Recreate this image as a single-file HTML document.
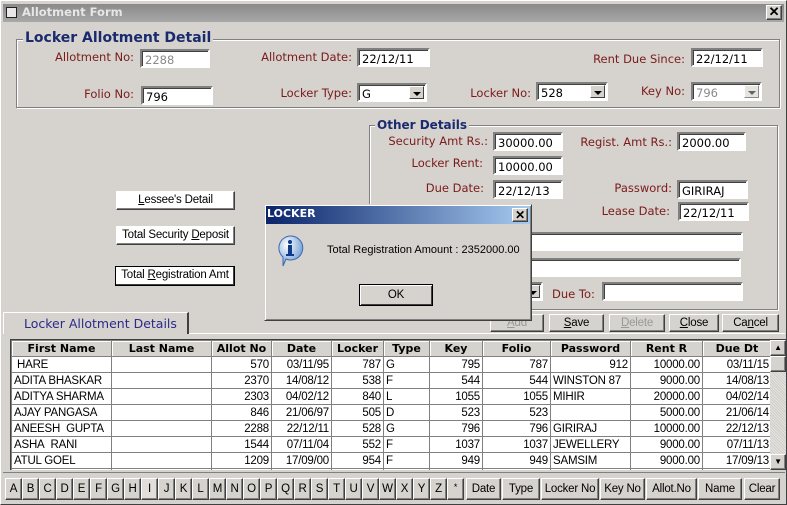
<!DOCTYPE html><html><head><meta charset="utf-8"><style>
*{box-sizing:border-box;margin:0;padding:0}
body{width:787px;height:505px;background:#d6d3ce;position:relative;overflow:hidden;font-family:"DejaVu Sans",Verdana,sans-serif;font-size:11px}
.a{position:absolute}
.lbl{position:absolute;color:#7a1a1a;text-align:right;white-space:nowrap;font-size:11.5px}
.in{position:absolute;background:#fff;border:2px solid;border-color:#808080 #fff #fff #808080;box-shadow:inset 1px 1px 0 #404040;font-size:11.5px;padding:2px 3px;white-space:nowrap;height:19px}
.dis{color:#8a8a8a}
.arr{position:absolute;right:1px;top:1px;bottom:1px;width:15px;background:#d6d3ce;border:1px solid;border-color:#fff #404040 #404040 #fff}
.arr:after{content:"";position:absolute;left:3px;top:5px;border-left:4px solid transparent;border-right:4px solid transparent;border-top:4px solid #000}
.grp{position:absolute;border:1px solid #808080;box-shadow:1px 1px 0 #fff,inset 1px 1px 0 #fff}
.leg{position:absolute;background:#d6d3ce;color:#1a2a6e;font-weight:bold;padding:0 2px}
.btn{position:absolute;background:#d6d3ce;border:1px solid;border-color:#fff #404040 #404040 #fff;box-shadow:inset -1px -1px 0 #808080;text-align:center;font-family:"Liberation Sans",Arial,sans-serif;font-size:11.5px;letter-spacing:-0.2px;white-space:nowrap}
.wb{background:#fff}
table{border-collapse:collapse;font-family:"Liberation Sans",Arial,sans-serif;font-size:11.5px;letter-spacing:-0.2px}
td{border:1px solid #808080;height:16px;padding:0 2px;background:#fff;white-space:nowrap;line-height:14px;overflow:hidden}
th{height:16px;background:#d6d3ce;border:1px solid #808080;box-shadow:inset 1px 1px 0 #fff;font-family:"DejaVu Sans",sans-serif;font-size:11px;font-weight:bold;padding:0;letter-spacing:0}
.r{text-align:right}
</style></head><body>
<div class="a" style="left:0;top:0;width:787px;height:505px;border:1px solid #fff;border-right-color:#404040;border-bottom-color:#404040"></div>
<div class="a" style="left:3px;top:4px;width:781px;height:18px;background:linear-gradient(#8a8a8a,#a8a8a8)"></div>
<div class="a" style="left:6px;top:7px;width:11px;height:11px;background:#e8e8e8;border:1px solid #222"></div>
<div class="a" style="left:22px;top:5px;color:#e6e6e6;font-weight:bold;font-family:'DejaVu Sans';font-size:11.5px">Allotment Form</div>
<div class="btn" style="left:766px;top:5px;width:16px;height:15px;font-size:13px;line-height:12px;font-weight:bold">✕</div>

<div class="grp" style="left:16px;top:39px;width:764px;height:69px"></div>
<div class="leg" style="left:23px;top:30px;font-size:14px">Locker Allotment Detail</div>
<div class="lbl" style="left:20px;width:114px;top:50px">Allotment No:</div>
<div class="in dis" style="left:140px;top:49px;width:70px">2288</div>
<div class="lbl" style="left:240px;width:112px;top:50px">Allotment Date:</div>
<div class="in" style="left:357px;top:48px;width:73px">22/12/11</div>
<div class="lbl" style="left:560px;width:125px;top:52px">Rent Due Since:</div>
<div class="in" style="left:691px;top:48px;width:72px">22/12/11</div>
<div class="lbl" style="left:20px;width:114px;top:87px">Folio No:</div>
<div class="in" style="left:141px;top:86px;width:72px">796</div>
<div class="lbl" style="left:240px;width:112px;top:86px">Locker Type:</div>
<div class="in" style="left:357px;top:83px;width:70px">G<span class="arr"></span></div>
<div class="lbl" style="left:440px;width:91px;top:86px">Locker No:</div>
<div class="in" style="left:536px;top:82px;width:72px">528<span class="arr"></span></div>
<div class="lbl" style="left:610px;width:75px;top:84px">Key No:</div>
<div class="in dis" style="left:691px;top:82px;width:71px;background:#fff">796<span class="arr" style="opacity:.6"></span></div>

<div class="grp" style="left:369px;top:125px;width:409px;height:185px"></div>
<div class="leg" style="left:375px;top:118px;font-size:12px">Other Details</div>
<div class="lbl" style="left:370px;width:118px;top:134px">Security Amt Rs.:</div>
<div class="in" style="left:493px;top:132px;width:70px">30000.00</div>
<div class="lbl" style="left:560px;width:112px;top:135px">Regist. Amt Rs.:</div>
<div class="in" style="left:677px;top:132px;width:69px">2000.00</div>
<div class="lbl" style="left:380px;width:103px;top:156px">Locker Rent:</div>
<div class="in" style="left:493px;top:156px;width:70px">10000.00</div>
<div class="lbl" style="left:380px;width:104px;top:181px">Due Date:</div>
<div class="in" style="left:493px;top:180px;width:70px">22/12/13</div>
<div class="lbl" style="left:580px;width:92px;top:181px">Password:</div>
<div class="in" style="left:677px;top:180px;width:71px">GIRIRAJ</div>
<div class="lbl" style="left:580px;width:90px;top:204px">Lease Date:</div>
<div class="in" style="left:678px;top:202px;width:71px">22/12/11</div>
<div class="in" style="left:520px;top:232px;width:223px"></div>
<div class="in" style="left:520px;top:258px;width:221px"></div>
<div class="in" style="left:500px;top:282px;width:43px"><span class="arr"></span></div>
<div class="lbl" style="left:552px;top:287px;width:48px;text-align:left">Due To:</div>
<div class="in" style="left:602px;top:282px;width:141px"></div>

<div class="btn wb" style="left:116px;top:191px;width:119px;height:19px;line-height:16px"><u>L</u>essee's Detail</div>
<div class="btn wb" style="left:116px;top:226px;width:119px;height:19px;line-height:16px">Total Security <u>D</u>eposit</div>
<div class="btn wb" style="left:115px;top:266px;width:120px;height:20px;line-height:17px;border:1px solid #000;box-shadow:inset -1px -1px 0 #404040">Total <u>R</u>egistration Amt</div>

<div class="btn" style="left:490px;top:314px;width:54px;height:18px;color:#999;line-height:16px"><u>A</u>dd</div>
<div class="btn" style="left:549px;top:314px;width:55px;height:18px;line-height:16px"><u>S</u>ave</div>
<div class="btn" style="left:609px;top:314px;width:56px;height:18px;color:#999;line-height:16px"><u>D</u>elete</div>
<div class="btn" style="left:669px;top:314px;width:50px;height:18px;line-height:16px"><u>C</u>lose</div>
<div class="btn" style="left:722px;top:314px;width:57px;height:18px;line-height:16px">Ca<u>n</u>cel</div>

<div class="a" style="left:3px;top:333px;width:782px;height:1px;background:#fff"></div>
<div class="a" style="left:3px;top:312px;width:186px;height:22px;background:#d6d3ce;border-top:1px solid #fff;border-left:1px solid #fff;border-right:2px solid #404040"></div>
<div class="a" style="left:24px;top:316px;color:#2a2a8a;font-size:12.5px">Locker Allotment Details</div>

<div class="a" style="left:10px;top:339px;width:776px;height:131px;background:#fff;overflow:hidden;border-left:1px solid #404040;border-top:1px solid #404040">
<table style="width:760px;table-layout:fixed">
<colgroup><col style="width:100px"><col style="width:100px"><col style="width:60px"><col style="width:60px"><col style="width:52px"><col style="width:46px"><col style="width:53px"><col style="width:68px"><col style="width:80px"><col style="width:72px"><col style="width:69px"></colgroup>
<tr><th>First Name</th><th>Last Name</th><th>Allot No</th><th>Date</th><th>Locker</th><th>Type</th><th>Key</th><th>Folio</th><th>Password</th><th>Rent R</th><th>Due Dt</th></tr>
<tr><td>&nbsp;HARE</td><td></td><td class="r">570</td><td class="r">03/11/95</td><td class="r">787</td><td>G</td><td class="r">795</td><td class="r">787</td><td class="r">912</td><td class="r">10000.00</td><td class="r">03/11/15</td></tr>
<tr><td>ADITA BHASKAR</td><td></td><td class="r">2370</td><td class="r">14/08/12</td><td class="r">538</td><td>F</td><td class="r">544</td><td class="r">544</td><td>WINSTON 87</td><td class="r">9000.00</td><td class="r">14/08/13</td></tr>
<tr><td>ADITYA SHARMA</td><td></td><td class="r">2303</td><td class="r">04/02/12</td><td class="r">840</td><td>L</td><td class="r">1055</td><td class="r">1055</td><td>MIHIR</td><td class="r">20000.00</td><td class="r">04/02/14</td></tr>
<tr><td>AJAY PANGASA</td><td></td><td class="r">846</td><td class="r">21/06/97</td><td class="r">505</td><td>D</td><td class="r">523</td><td class="r">523</td><td></td><td class="r">5000.00</td><td class="r">21/06/14</td></tr>
<tr><td>ANEESH&nbsp; GUPTA</td><td></td><td class="r">2288</td><td class="r">22/12/11</td><td class="r">528</td><td>G</td><td class="r">796</td><td class="r">796</td><td>GIRIRAJ</td><td class="r">10000.00</td><td class="r">22/12/13</td></tr>
<tr><td>ASHA&nbsp; RANI</td><td></td><td class="r">1544</td><td class="r">07/11/04</td><td class="r">552</td><td>F</td><td class="r">1037</td><td class="r">1037</td><td>JEWELLERY</td><td class="r">9000.00</td><td class="r">07/11/13</td></tr>
<tr><td>ATUL GOEL</td><td></td><td class="r">1209</td><td class="r">17/09/00</td><td class="r">954</td><td>F</td><td class="r">949</td><td class="r">949</td><td>SAMSIM</td><td class="r">9000.00</td><td class="r">17/09/13</td></tr>
<tr><td></td><td></td><td></td><td></td><td></td><td></td><td></td><td></td><td></td><td></td><td></td></tr>
</table>
<div class="a" style="left:759px;top:0;width:16px;height:131px;background:repeating-linear-gradient(45deg,#e6e4e0 0 1px,#d0cdc8 1px 2px)"></div>
<div class="btn" style="left:759px;top:0;width:16px;height:16px;font-size:8px;line-height:14px">▲</div>
<div class="btn" style="left:759px;top:16px;width:16px;height:16px"></div>
<div class="btn" style="left:759px;top:114px;width:16px;height:16px;font-size:8px;line-height:14px">▼</div>
</div>
<div class="a" style="left:3px;top:472px;width:782px;height:1px;background:#808080"></div>

<div class="btn" style="left:5px;top:478px;width:17px;height:22px;line-height:20px">A</div>
<div class="btn" style="left:22px;top:478px;width:17px;height:22px;line-height:20px">B</div>
<div class="btn" style="left:39px;top:478px;width:17px;height:22px;line-height:20px">C</div>
<div class="btn" style="left:56px;top:478px;width:17px;height:22px;line-height:20px">D</div>
<div class="btn" style="left:73px;top:478px;width:17px;height:22px;line-height:20px">E</div>
<div class="btn" style="left:90px;top:478px;width:17px;height:22px;line-height:20px">F</div>
<div class="btn" style="left:107px;top:478px;width:17px;height:22px;line-height:20px">G</div>
<div class="btn" style="left:124px;top:478px;width:17px;height:22px;line-height:20px">H</div>
<div class="btn" style="left:141px;top:478px;width:17px;height:22px;line-height:20px;background:#e2dfda">I</div>
<div class="btn" style="left:158px;top:478px;width:17px;height:22px;line-height:20px">J</div>
<div class="btn" style="left:175px;top:478px;width:17px;height:22px;line-height:20px">K</div>
<div class="btn" style="left:192px;top:478px;width:17px;height:22px;line-height:20px">L</div>
<div class="btn" style="left:209px;top:478px;width:17px;height:22px;line-height:20px">M</div>
<div class="btn" style="left:226px;top:478px;width:17px;height:22px;line-height:20px">N</div>
<div class="btn" style="left:243px;top:478px;width:17px;height:22px;line-height:20px">O</div>
<div class="btn" style="left:260px;top:478px;width:17px;height:22px;line-height:20px">P</div>
<div class="btn" style="left:277px;top:478px;width:17px;height:22px;line-height:20px">Q</div>
<div class="btn" style="left:294px;top:478px;width:17px;height:22px;line-height:20px">R</div>
<div class="btn" style="left:311px;top:478px;width:17px;height:22px;line-height:20px">S</div>
<div class="btn" style="left:328px;top:478px;width:17px;height:22px;line-height:20px">T</div>
<div class="btn" style="left:345px;top:478px;width:17px;height:22px;line-height:20px">U</div>
<div class="btn" style="left:362px;top:478px;width:17px;height:22px;line-height:20px">V</div>
<div class="btn" style="left:379px;top:478px;width:17px;height:22px;line-height:20px">W</div>
<div class="btn" style="left:396px;top:478px;width:17px;height:22px;line-height:20px">X</div>
<div class="btn" style="left:413px;top:478px;width:17px;height:22px;line-height:20px">Y</div>
<div class="btn" style="left:430px;top:478px;width:17px;height:22px;line-height:20px">Z</div>
<div class="btn" style="left:447px;top:478px;width:17px;height:22px;line-height:16px;font-size:9px">*</div>
<div class="btn" style="left:466px;top:478px;width:35px;height:22px;line-height:20px">Date</div>
<div class="btn" style="left:502px;top:478px;width:38px;height:22px;line-height:20px">Type</div>
<div class="btn" style="left:541px;top:478px;width:58px;height:22px;line-height:20px">Locker No</div>
<div class="btn" style="left:600px;top:478px;width:45px;height:22px;line-height:20px">Key No</div>
<div class="btn" style="left:646px;top:478px;width:51px;height:22px;line-height:20px">Allot.No</div>
<div class="btn" style="left:698px;top:478px;width:44px;height:22px;line-height:20px">Name</div>
<div class="btn" style="left:744px;top:478px;width:36px;height:22px;line-height:20px">Clear</div>

<div class="a" style="left:264px;top:204px;width:268px;height:117px;background:#d6d3ce;border:1px solid;border-color:#d6d3ce #404040 #404040 #d6d3ce;box-shadow:inset 1px 1px 0 #fff,inset -1px -1px 0 #808080"></div>
<div class="a" style="left:266px;top:206px;width:264px;height:18px;background:linear-gradient(90deg,#0a246a,#a6caf0)"></div>
<div class="a" style="left:267px;top:207px;color:#fff;font-weight:bold;font-size:11px">LOCKER</div>
<div class="btn" style="left:512px;top:208px;width:16px;height:14px;font-size:12px;line-height:12px;font-weight:bold">✕</div>
<svg class="a" style="left:275px;top:234px" width="30" height="34" viewBox="0 0 30 34"><defs><radialGradient id="g" cx=".35" cy=".3" r=".8"><stop offset="0" stop-color="#fff"/><stop offset="1" stop-color="#5d8fd0"/></radialGradient></defs><path d="M15 2a12 12 0 1 1-4 23l-3 7 0-9A12 12 0 0 1 15 2z" fill="url(#g)" stroke="#3a6ab0"/><circle cx="15" cy="8" r="2" fill="#123a8a"/><rect x="13" y="11" width="4" height="10" fill="#123a8a"/><rect x="11" y="20" width="8" height="2" fill="#123a8a"/></svg>
<div class="a" style="left:327px;top:244px;font-family:'Liberation Sans',Arial;font-size:11px">Total Registration Amount : 2352000.00</div>
<div class="btn" style="left:359px;top:284px;width:74px;height:22px;line-height:20px;border:1px solid #000;box-shadow:inset 1px 1px 0 #fff,inset -1px -1px 0 #404040">OK</div>
</body></html>
